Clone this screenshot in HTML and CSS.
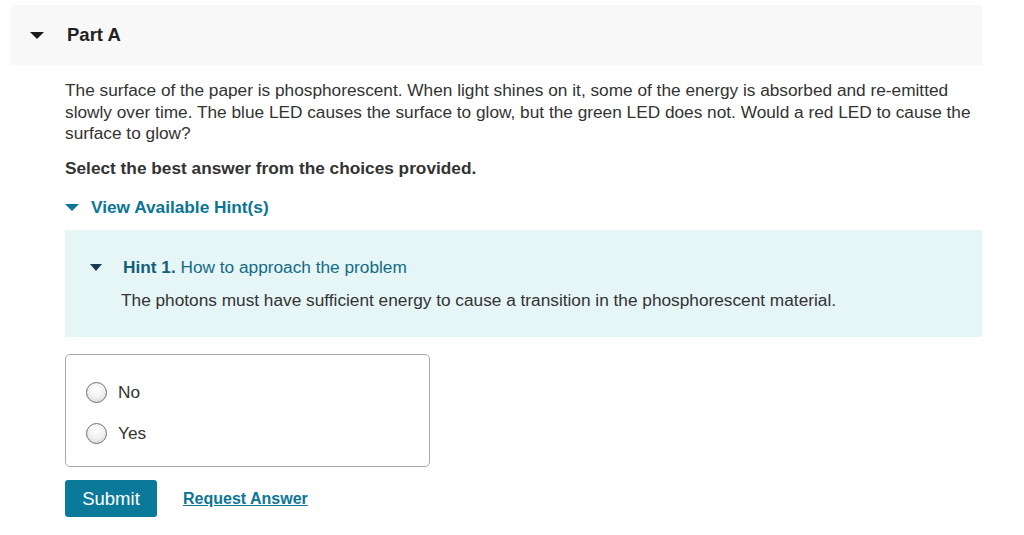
FILE: index.html
```html
<!DOCTYPE html>
<html>
<head>
<meta charset="utf-8">
<link rel="stylesheet" href="styles.css">
</head>
<body>
<div class="page">
  <div class="part-header">
    <span class="tri tri-dark"></span>
    <span class="part-title">Part A</span>
  </div>
  <div class="content">
    <p class="question">The surface of the paper is phosphorescent. When light shines on it, some of the energy is absorbed and re-emitted slowly over time. The blue LED causes the surface to glow, but the green LED does not. Would a red LED to cause the surface to glow?</p>
    <p class="instr">Select the best answer from the choices provided.</p>
    <div class="hints-toggle">
      <span class="tri tri-teal"></span>
      <span class="hints-label">View Available Hint(s)</span>
    </div>
    <div class="hint-box">
      <div class="hint-head">
        <span class="tri tri-navy"></span>
        <span class="hint-title"><b>Hint 1.</b> How to approach the problem</span>
      </div>
      <p class="hint-text">The photons must have sufficient energy to cause a transition in the phosphorescent material.</p>
    </div>
    <div class="answers">
      <label class="opt"><span class="radio"></span><span>No</span></label>
      <label class="opt"><span class="radio"></span><span>Yes</span></label>
    </div>
    <div class="actions">
      <button class="submit">Submit</button>
      <a class="request" href="#">Request Answer</a>
    </div>
  </div>
</div>
</body>
</html>
```
FILE: styles.css
```css
* { box-sizing: border-box; }
html, body { margin: 0; padding: 0; background: #fff; }
body { font-family: "Liberation Sans", Arial, Helvetica, sans-serif; color: #333; font-size: 17.25px; }
.page { padding: 5px 42px 0 11px; width: 1024px; }
.part-header {
  background: #f8f8f8;
  height: 60px;
  display: flex;
  align-items: center;
  padding-left: 19px;
}
.tri {
  display: inline-block;
  width: 0; height: 0;
  border-left: 6.5px solid transparent;
  border-right: 6.5px solid transparent;
  border-top: 7px solid #222;
}
.tri-dark { border-top-color: #1a1a1a; border-left-width: 7.5px; border-right-width: 7.5px; }
.part-title { font-weight: bold; font-size: 18.5px; color: #222; margin-left: 23px; }
.content { padding-left: 54px; }
.question { margin: 15px 0 0; line-height: 21.5px; padding-right: 6px; }
.instr { margin: 13px 0 0; font-weight: bold; line-height: 21.5px; }
.hints-toggle { display: flex; align-items: center; margin-top: 18px; height: 21px; }
.tri-teal { border-top-color: #0b7596; border-left-width: 7px; border-right-width: 7px; }
.hints-label { color: #0b7596; font-weight: bold; margin-left: 12px; }
.hint-box { background: #e6f5f6; margin-top: 12px; padding: 27px 0 26px 25px; }
.hint-head { display: flex; align-items: center; height: 20px; }
.tri-navy { border-top-color: #1a3950; }
.hint-title { color: #146b87; margin-left: 21px; }
.hint-title b { color: #145f78; }
.hint-text { margin: 13px 0 0 31px; line-height: 21px; }
.answers {
  margin-top: 17px;
  width: 365px;
  height: 113px;
  border: 1px solid #a9a9a9;
  border-radius: 5px;
  padding: 26px 0 0 20px;
  display: flex;
  flex-direction: column;
  gap: 19px;
}
.opt { display: flex; align-items: center; height: 22px; }
.radio {
  width: 21px; height: 21px;
  border-radius: 50%;
  border: 1px solid #707070;
  background: radial-gradient(circle at 50% 35%, #fff 0%, #f3f3f3 45%, #d0d0d0 100%);
  margin-right: 11px;
}
.actions { display: flex; align-items: center; margin-top: 13px; }
.submit {
  background: #0b7a9a;
  color: #fff;
  border: none;
  border-radius: 3px;
  width: 92px;
  height: 37px;
  font-family: "Liberation Sans", Arial, sans-serif;
  font-size: 18.5px;
  padding: 0;
}
.request {
  margin-left: 26px;
  color: #0b7596;
  font-weight: bold;
  font-size: 16px;
  text-decoration: underline;
}
```
